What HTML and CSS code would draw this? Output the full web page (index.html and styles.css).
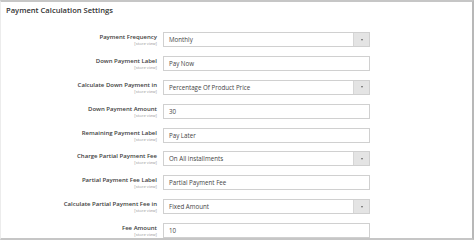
FILE: index.html
```html
<!DOCTYPE html>
<html>
<head>
<title>Payment Calculation Settings</title>
<link rel="stylesheet" href="styles.css">
</head>
<body>
  <div class="frame">
    <h2 class="title">Payment Calculation Settings</h2>
    <div class="form">
      <div class="row">
        <div class="label">Payment Frequency<span class="scope">[store view]</span></div>
        <div class="field select"><span>Monthly</span><i class="arrow"></i></div>
      </div>
      <div class="row">
        <div class="label">Down Payment Label<span class="scope">[store view]</span></div>
        <div class="field"><span>Pay Now</span></div>
      </div>
      <div class="row">
        <div class="label">Calculate Down Payment in<span class="scope">[store view]</span></div>
        <div class="field select"><span>Percentage Of Product Price</span><i class="arrow"></i></div>
      </div>
      <div class="row">
        <div class="label">Down Payment Amount<span class="scope">[store view]</span></div>
        <div class="field"><span>30</span></div>
      </div>
      <div class="row">
        <div class="label">Remaining Payment Label<span class="scope">[store view]</span></div>
        <div class="field"><span>Pay Later</span></div>
      </div>
      <div class="row">
        <div class="label">Charge Partial Payment Fee<span class="scope">[store view]</span></div>
        <div class="field select"><span>On All installments</span><i class="arrow"></i></div>
      </div>
      <div class="row">
        <div class="label">Partial Payment Fee Label<span class="scope">[store view]</span></div>
        <div class="field"><span>Partial Payment Fee</span></div>
      </div>
      <div class="row">
        <div class="label">Calculate Partial Payment Fee in<span class="scope">[store view]</span></div>
        <div class="field select"><span>Fixed Amount</span><i class="arrow"></i></div>
      </div>
      <div class="row">
        <div class="label">Fee Amount<span class="scope">[store view]</span></div>
        <div class="field"><span>10</span></div>
      </div>
    </div>
  </div>
</body>
</html>
```

FILE: styles.css
```css
body {
  margin: 0;
  background: #fff;
  font-family: "Open Sans", sans-serif;
  color: #333;
}

.frame {
  height: 240px;
  box-sizing: border-box;
  border-top: 2px solid #c6c6c6;
  border-right: 2px solid #b8b8b8;
  border-bottom: 2px solid #c6c6c6;
  border-left: 1px solid #ececec;
  padding-left: 5px;
  overflow: hidden;
}

.title {
  margin: 3px 0 0;
  font-size: 7.6px;
  font-weight: 600;
  line-height: 10px;
  color: #333;
}

.form {
  display: flex;
  flex-direction: column;
  gap: 8.9px;
  margin-top: 17px;
}

.row {
  display: grid;
  grid-template-columns: 151px 207px;
  column-gap: 6px;
}

.label {
  display: flex;
  flex-direction: column;
  align-items: flex-end;
  font-size: 6px;
  font-weight: 600;
  line-height: 8px;
  padding-top: 1px;
  white-space: nowrap;
  color: #3d3d3d;
}

.scope {
  font-size: 4.2px;
  font-weight: 400;
  line-height: 5px;
  color: #999;
}

.field {
  height: 15px;
  box-sizing: border-box;
  border: 1px solid #d0d0d0;
  display: flex;
  align-items: center;
  padding-left: 5px;
  font-size: 6.2px;
  color: #444;
  background: #fff;
}

.field span {
  flex: 1;
  white-space: nowrap;
}

.arrow {
  align-self: stretch;
  width: 15px;
  background: #e4e4e4;
  border-left: 1px solid #d6d6d6;
  display: flex;
  align-items: center;
  justify-content: center;
}

.arrow::after {
  content: '';
  border-left: 1.5px solid transparent;
  border-right: 1.5px solid transparent;
  border-top: 2px solid #666;
}
```
